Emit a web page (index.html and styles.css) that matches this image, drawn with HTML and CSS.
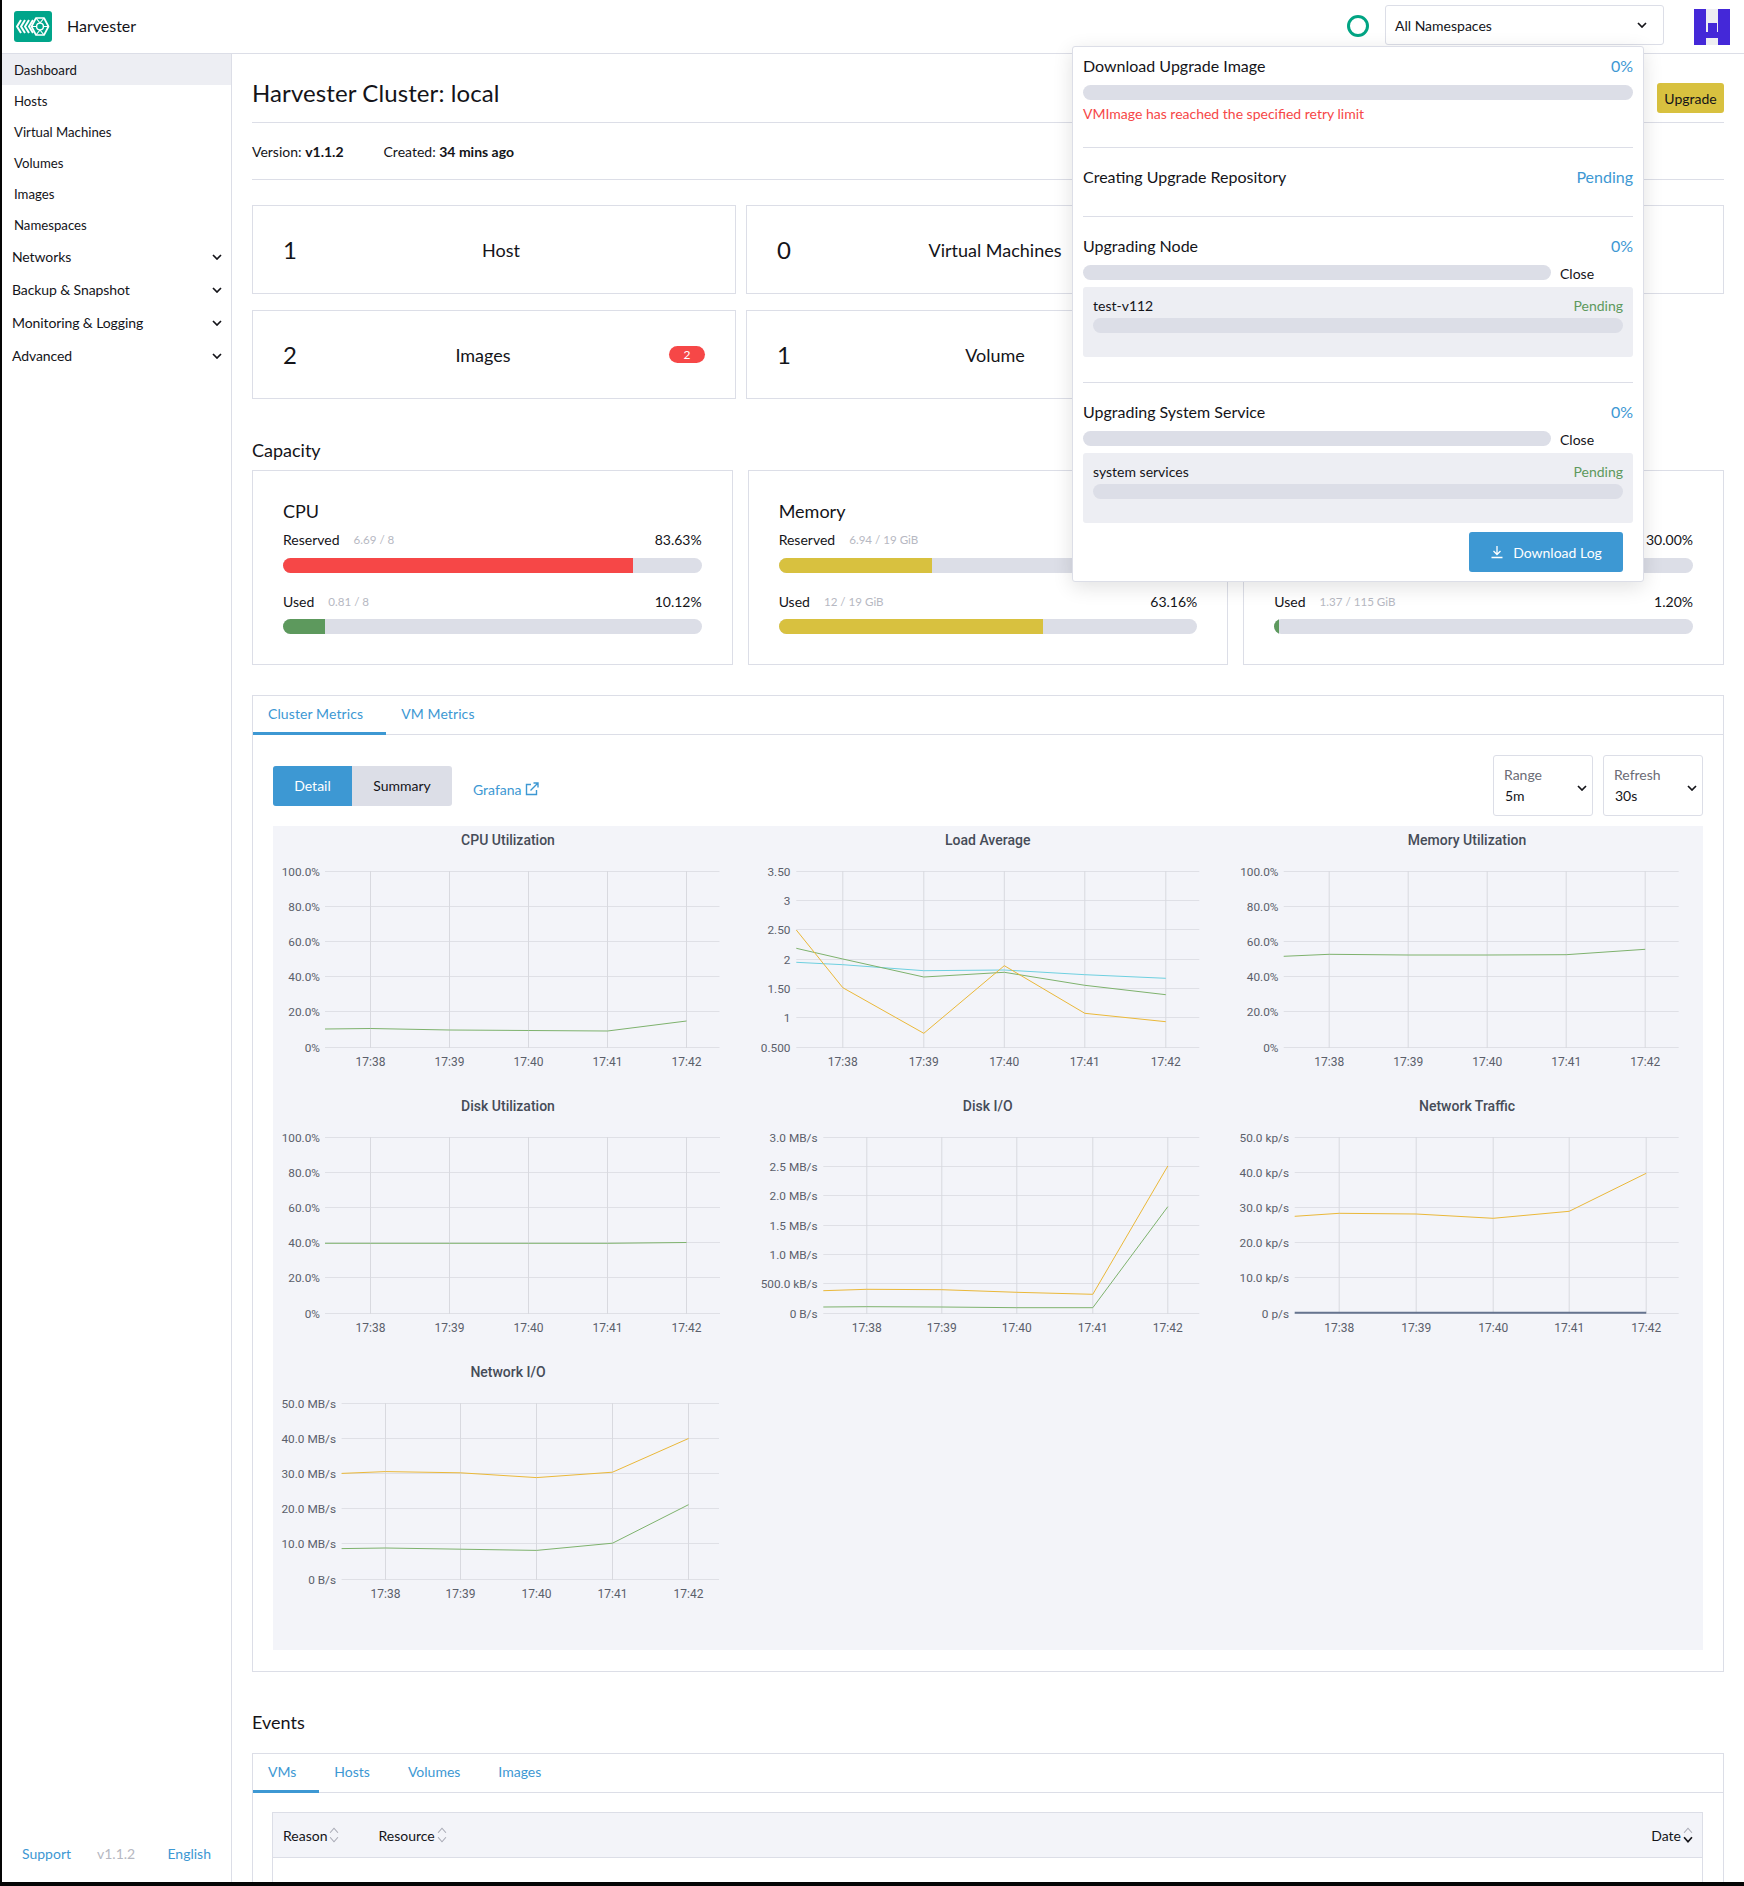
FILE: index.html
```html
<!DOCTYPE html>
<html lang="en">
<head>
<meta charset="utf-8">
<title>Harvester</title>
<link rel="stylesheet" href="styles.css">
</head>
<body>
<div class="app">
  <header class="topbar">
    <svg class="logo" viewBox="0 0 38 31" aria-hidden="true">
      <rect width="38" height="31" rx="3" fill="#00a58a"/>
      <g fill="none" stroke="#fff" stroke-width="2" stroke-linejoin="round">
        <path d="M7 9 L3 15.5 L7 22"/>
        <path d="M11 9 L7 15.5 L11 22"/>
        <path d="M15 9 L11 15.5 L15 22"/>
        <path d="M19 9 L15 15.5 L19 22"/>
        <path stroke-width="1.7" d="M22 7 L30 7 L34.5 15.5 L30 24 L22 24 L17.5 15.5 Z"/>
        <path stroke-width="1.2" d="M22 7 L26 12 L30 7 M22 24 L26 19 L30 24 M17.5 15.5 L22.5 15.5 M29.5 15.5 L34.5 15.5"/>
        <circle cx="26" cy="15.5" r="3.4" stroke-width="1.4"/>
      </g>
    </svg>
    <span class="brand">Harvester</span>
    <svg class="status" viewBox="0 0 22 22" aria-hidden="true"><circle cx="11" cy="11" r="9.5" fill="none" stroke="#00a483" stroke-width="3"/></svg>
    <div class="ns-select"><span>All Namespaces</span>
      <svg class="chev" viewBox="0 0 10 6"><path d="M1 1 L5 5 L9 1"/></svg>
    </div>
    <svg class="avatar" viewBox="0 0 36 36" aria-hidden="true">
      <rect width="36" height="36" fill="#eeeef2"/>
      <path fill="#4428d8" d="M0 0H12V36H0Z M24 0H36V36H24Z M14 14H23V23H14Z M12 23H24V29H12Z"/>
    </svg>
  </header>

  <div class="layout">
    <aside class="sidebar">
      <nav class="nav">
        <a class="nav-item active">Dashboard</a>
        <a class="nav-item">Hosts</a>
        <a class="nav-item">Virtual Machines</a>
        <a class="nav-item">Volumes</a>
        <a class="nav-item">Images</a>
        <a class="nav-item">Namespaces</a>
        <a class="nav-group">Networks<svg class="chev" viewBox="0 0 10 6"><path d="M1 1 L5 5 L9 1"/></svg></a>
        <a class="nav-group">Backup &amp; Snapshot<svg class="chev" viewBox="0 0 10 6"><path d="M1 1 L5 5 L9 1"/></svg></a>
        <a class="nav-group">Monitoring &amp; Logging<svg class="chev" viewBox="0 0 10 6"><path d="M1 1 L5 5 L9 1"/></svg></a>
        <a class="nav-group">Advanced<svg class="chev" viewBox="0 0 10 6"><path d="M1 1 L5 5 L9 1"/></svg></a>
      </nav>
      <div class="side-foot">
        <a class="link">Support</a>
        <span class="muted">v1.1.2</span>
        <a class="link foot-lang">English</a>
      </div>
    </aside>

    <main class="main">
      <div class="title-row">
        <h1>Harvester Cluster: local</h1>
        <button class="btn-upgrade">Upgrade</button>
      </div>
      <div class="meta">
        <span>Version: <b>v1.1.2</b></span>
        <span>Created: <b>34 mins ago</b></span>
      </div>

      <section class="counts">
        <div class="count"><span class="num">1</span><span class="lbl">Host</span></div>
        <div class="count"><span class="num">0</span><span class="lbl">Virtual Machines</span></div>
        <div class="count"></div>
        <div class="count"><span class="num">2</span><span class="lbl">Images</span><span class="badge">2</span></div>
        <div class="count"><span class="num">1</span><span class="lbl">Volume</span></div>
      </section>

      <h2 class="sec-title cap-title">Capacity</h2>
      <section class="capacity">
        <div class="cap">
          <h3>CPU</h3>
          <div class="cap-row"><span>Reserved</span><small>6.69 / 8</small><em>83.63%</em></div>
          <div class="bar"><i class="red" style="width:83.63%"></i></div>
          <div class="cap-row used"><span>Used</span><small>0.81 / 8</small><em>10.12%</em></div>
          <div class="bar"><i class="green" style="width:10.12%"></i></div>
        </div>
        <div class="cap">
          <h3>Memory</h3>
          <div class="cap-row"><span>Reserved</span><small>6.94 / 19 GiB</small><em>36.53%</em></div>
          <div class="bar"><i class="yellow" style="width:36.53%"></i></div>
          <div class="cap-row used"><span>Used</span><small>12 / 19 GiB</small><em>63.16%</em></div>
          <div class="bar"><i class="yellow" style="width:63.16%"></i></div>
        </div>
        <div class="cap">
          <h3>Storage</h3>
          <div class="cap-row"><span>Reserved</span><small>34.5 / 115 GiB</small><em>30.00%</em></div>
          <div class="bar"><i class="green" style="width:30%"></i></div>
          <div class="cap-row used"><span>Used</span><small>1.37 / 115 GiB</small><em>1.20%</em></div>
          <div class="bar"><i class="green" style="width:1.2%"></i></div>
        </div>
      </section>

      <section class="box metrics">
        <div class="tabs">
          <a class="tab active">Cluster Metrics</a>
          <a class="tab">VM Metrics</a>
        </div>
        <div class="box-body">
          <div class="toolbar">
            <div class="toggle"><span class="on">Detail</span><span>Summary</span></div>
            <a class="link grafana">Grafana
              <svg viewBox="0 0 14 14" aria-hidden="true"><path d="M11.5 8V12.5H1.5V2.5H6M5.5 8.5L12.5 1.5M8.5 1H13V5.5"/></svg>
            </a>
            <div class="pick push"><label>Range</label><span>5m</span><svg class="chev" viewBox="0 0 10 6"><path d="M1 1 L5 5 L9 1"/></svg></div>
            <div class="pick"><label>Refresh</label><span>30s</span><svg class="chev" viewBox="0 0 10 6"><path d="M1 1 L5 5 L9 1"/></svg></div>
          </div>

          <div class="charts">
            <svg class="chart" aria-label="CPU Utilization">
              <text class="ct" x="235" y="19">CPU Utilization</text>
              <path class="gh" d="M52 45.5H446.5M52 80.5H446.5M52 115.5H446.5M52 150.5H446.5M52 185.5H446.5M52 221.5H446.5"/>
              <path class="gv" d="M97.5 45V222M176.5 45V222M255.5 45V222M334.5 45V222M413.5 45V222"/>
              <g class="yl"><text x="47" y="50">100.0%</text><text x="47" y="85">80.0%</text><text x="47" y="120">60.0%</text><text x="47" y="155">40.0%</text><text x="47" y="190">20.0%</text><text x="47" y="226">0%</text></g>
              <g class="xl"><text x="97.5" y="240">17:38</text><text x="176.5" y="240">17:39</text><text x="255.5" y="240">17:40</text><text x="334.5" y="240">17:41</text><text x="413.5" y="240">17:42</text></g>
              <polyline class="s-green" points="52,203 97.5,202.5 176.5,204 255.5,204.5 334.5,205 413.5,195"/>
            </svg>

            <svg class="chart" aria-label="Load Average">
              <text class="ct" x="237.7" y="19">Load Average</text>
              <path class="gh" d="M46.3 45.5H449.3M46.3 74.5H449.3M46.3 103.5H449.3M46.3 133.5H449.3M46.3 162.5H449.3M46.3 191.5H449.3M46.3 221.5H449.3"/>
              <path class="gv" d="M92.8 45V222M173.8 45V222M254.3 45V222M334.8 45V222M415.8 45V222"/>
              <g class="yl"><text x="40.5" y="50">3.50</text><text x="40.5" y="79">3</text><text x="40.5" y="108">2.50</text><text x="40.5" y="138">2</text><text x="40.5" y="167">1.50</text><text x="40.5" y="196">1</text><text x="40.5" y="226">0.500</text></g>
              <g class="xl"><text x="92.8" y="240">17:38</text><text x="173.8" y="240">17:39</text><text x="254.3" y="240">17:40</text><text x="334.8" y="240">17:41</text><text x="415.8" y="240">17:42</text></g>
              <polyline class="s-cyan" points="46.3,136.3 92.8,138.7 173.8,144.7 254.3,144 334.8,148.7 415.8,152.3"/>
              <polyline class="s-green" points="46.3,122.3 92.8,133 173.8,151 254.3,146.3 334.8,159.3 415.8,168.7"/>
              <polyline class="s-orange" points="46.3,104 92.8,161.7 173.8,207.3 254.3,139.7 334.8,187.3 415.8,195.7"/>
            </svg>

            <svg class="chart" aria-label="Memory Utilization">
              <text class="ct" x="241" y="19">Memory Utilization</text>
              <path class="gh" d="M57.7 45.5H452.7M57.7 80.5H452.7M57.7 115.5H452.7M57.7 150.5H452.7M57.7 185.5H452.7M57.7 221.5H452.7"/>
              <path class="gv" d="M103.2 45V222M182.2 45V222M261.2 45V222M340.2 45V222M419.2 45V222"/>
              <g class="yl"><text x="52.5" y="50">100.0%</text><text x="52.5" y="85">80.0%</text><text x="52.5" y="120">60.0%</text><text x="52.5" y="155">40.0%</text><text x="52.5" y="190">20.0%</text><text x="52.5" y="226">0%</text></g>
              <g class="xl"><text x="103.2" y="240">17:38</text><text x="182.2" y="240">17:39</text><text x="261.2" y="240">17:40</text><text x="340.2" y="240">17:41</text><text x="419.2" y="240">17:42</text></g>
              <polyline class="s-green" points="57.7,130.3 103.2,128.3 182.2,129 261.2,129 340.2,128.7 419.2,123.3"/>
            </svg>

            <svg class="chart" aria-label="Disk Utilization">
              <text class="ct" x="235" y="19">Disk Utilization</text>
              <path class="gh" d="M52 45.5H447M52 80.5H447M52 115.5H447M52 150.5H447M52 185.5H447M52 221.5H447"/>
              <path class="gv" d="M97.5 45V222M176.5 45V222M255.5 45V222M334.5 45V222M413.5 45V222"/>
              <g class="yl"><text x="47" y="50">100.0%</text><text x="47" y="85">80.0%</text><text x="47" y="120">60.0%</text><text x="47" y="155">40.0%</text><text x="47" y="190">20.0%</text><text x="47" y="226">0%</text></g>
              <g class="xl"><text x="97.5" y="240">17:38</text><text x="176.5" y="240">17:39</text><text x="255.5" y="240">17:40</text><text x="334.5" y="240">17:41</text><text x="413.5" y="240">17:42</text></g>
              <polyline class="s-green" points="52,151.3 97.5,151.3 176.5,151.3 255.5,151.3 334.5,151.3 413.5,150.5"/>
            </svg>

            <svg class="chart" aria-label="Disk I/O">
              <text class="ct" x="237.7" y="19">Disk I/O</text>
              <path class="gh" d="M73.3 45.5H449.3M73.3 74.5H449.3M73.3 103.5H449.3M73.3 133.5H449.3M73.3 162.5H449.3M73.3 191.5H449.3M73.3 221.5H449.3"/>
              <path class="gv" d="M116.8 45V222M191.8 45V222M266.8 45V222M342.8 45V222M417.8 45V222"/>
              <g class="yl"><text x="67.5" y="50">3.0 MB/s</text><text x="67.5" y="79">2.5 MB/s</text><text x="67.5" y="108">2.0 MB/s</text><text x="67.5" y="138">1.5 MB/s</text><text x="67.5" y="167">1.0 MB/s</text><text x="67.5" y="196">500.0 kB/s</text><text x="67.5" y="226">0 B/s</text></g>
              <g class="xl"><text x="116.8" y="240">17:38</text><text x="191.8" y="240">17:39</text><text x="266.8" y="240">17:40</text><text x="342.8" y="240">17:41</text><text x="417.8" y="240">17:42</text></g>
              <polyline class="s-green" points="73.3,215 116.8,214.7 191.8,215 266.8,215.7 342.8,215.7 417.8,114.7"/>
              <polyline class="s-orange" points="73.3,198.7 116.8,197.3 191.8,197.7 266.8,200.3 342.8,202.3 417.8,74"/>
            </svg>

            <svg class="chart" aria-label="Network Traffic">
              <text class="ct" x="241" y="19">Network Traffic</text>
              <path class="gh" d="M68.7 45.5H452.7M68.7 80.5H452.7M68.7 115.5H452.7M68.7 150.5H452.7M68.7 185.5H452.7M68.7 221.5H452.7"/>
              <path class="gv" d="M113.2 45V222M190.2 45V222M267.2 45V222M343.2 45V222M420.2 45V222"/>
              <g class="yl"><text x="63" y="50">50.0 kp/s</text><text x="63" y="85">40.0 kp/s</text><text x="63" y="120">30.0 kp/s</text><text x="63" y="155">20.0 kp/s</text><text x="63" y="190">10.0 kp/s</text><text x="63" y="226">0 p/s</text></g>
              <g class="xl"><text x="113.2" y="240">17:38</text><text x="190.2" y="240">17:39</text><text x="267.2" y="240">17:40</text><text x="343.2" y="240">17:41</text><text x="420.2" y="240">17:42</text></g>
              <polyline class="s-orange" points="68.7,124.3 113.2,121.3 190.2,122 267.2,126.3 343.2,119.3 420.2,81.3"/>
              <polyline class="s-zero" points="68.7,220.8 420.2,220.8"/>
            </svg>

            <svg class="chart" aria-label="Network I/O">
              <text class="ct" x="235" y="19">Network I/O</text>
              <path class="gh" d="M68.6 45.5H446M68.6 80.5H446M68.6 115.5H446M68.6 150.5H446M68.6 185.5H446M68.6 221.5H446"/>
              <path class="gv" d="M112.5 45V222M187.5 45V222M263.5 45V222M339.5 45V222M415.5 45V222"/>
              <g class="yl"><text x="63" y="50">50.0 MB/s</text><text x="63" y="85">40.0 MB/s</text><text x="63" y="120">30.0 MB/s</text><text x="63" y="155">20.0 MB/s</text><text x="63" y="190">10.0 MB/s</text><text x="63" y="226">0 B/s</text></g>
              <g class="xl"><text x="112.5" y="240">17:38</text><text x="187.5" y="240">17:39</text><text x="263.5" y="240">17:40</text><text x="339.5" y="240">17:41</text><text x="415.5" y="240">17:42</text></g>
              <polyline class="s-green" points="68.6,190.6 112.5,190 187.5,191.2 263.5,192.4 339.5,185.2 415.5,146.7"/>
              <polyline class="s-orange" points="68.6,115.4 112.5,113.6 187.5,114.8 263.5,119.6 339.5,114.2 415.5,80.5"/>
            </svg>
          </div>
        </div>
      </section>

      <h2 class="sec-title ev-title">Events</h2>
      <section class="box events">
        <div class="tabs">
          <a class="tab active">VMs</a>
          <a class="tab">Hosts</a>
          <a class="tab">Volumes</a>
          <a class="tab">Images</a>
        </div>
        <div class="ev-body">
          <div class="ev-table">
            <div class="thead">
              <span class="th">Reason<svg class="sort" viewBox="0 0 10 16"><path d="M1.5 6 L5 2 L8.5 6"/><path d="M1.5 10 L5 14 L8.5 10"/></svg></span>
              <span class="th">Resource<svg class="sort" viewBox="0 0 10 16"><path d="M1.5 6 L5 2 L8.5 6"/><path d="M1.5 10 L5 14 L8.5 10"/></svg></span>
              <span class="th th-date">Date<svg class="sort" viewBox="0 0 10 16"><path d="M1.5 6 L5 2 L8.5 6"/><path class="sort-on" d="M1.5 10 L5 14 L8.5 10"/></svg></span>
            </div>
          </div>
        </div>
      </section>
    </main>
  </div>

  <div class="popover">
    <div class="pop-head"><span>Download Upgrade Image</span><span class="blue">0%</span></div>
    <div class="bar pop-bar"></div>
    <p class="pop-error">VMImage has reached the specified retry limit</p>
    <hr class="pop-hr first">
    <div class="pop-head"><span>Creating Upgrade Repository</span><span class="blue">Pending</span></div>
    <hr class="pop-hr second">
    <div class="pop-head"><span>Upgrading Node</span><span class="blue">0%</span></div>
    <div class="pop-barrow"><div class="bar"></div><span>Close</span></div>
    <div class="pop-panel">
      <div class="pop-sub"><span>test-v112</span><span class="ok">Pending</span></div>
      <div class="bar"></div>
    </div>
    <hr class="pop-hr third">
    <div class="pop-head"><span>Upgrading System Service</span><span class="blue">0%</span></div>
    <div class="pop-barrow"><div class="bar"></div><span>Close</span></div>
    <div class="pop-panel">
      <div class="pop-sub"><span>system services</span><span class="ok">Pending</span></div>
      <div class="bar"></div>
    </div>
    <div class="pop-foot">
      <button class="btn-log">
        <svg viewBox="0 0 14 14" aria-hidden="true"><path d="M7 1V9M3.5 6L7 9.5L10.5 6M1.5 12.5H12.5"/></svg>
        Download Log
      </button>
    </div>
  </div>
</div>
</body>
</html>
```
FILE: styles.css
```css
* { box-sizing: border-box; }
html, body { margin: 0; height: 100%; }
body {
  background: #050505;
  font-family: Lato, "Open Sans", sans-serif;
  font-size: 14px;
  color: #141419;
  overflow: hidden;
}
a { text-decoration: none; }
.app {
  position: relative;
  margin-left: 2px;
  height: 1882px;
  background: #fff;
  display: flex;
  flex-direction: column;
  overflow: hidden;
}

/* top bar */
.topbar {
  flex: none;
  height: 54px;
  display: flex;
  align-items: flex-start;
  border-bottom: 1px solid #dcdee7;
  padding-right: 14px;
}
.logo { width: 38px; height: 31px; margin: 11px 0 0 12px; }
.brand { font-size: 16px; margin: 15px 0 0 15px; line-height: 22px; color: #141419; }
.status { width: 22px; height: 22px; margin: 15px 0 0 auto; }
.ns-select {
  width: 279px;
  height: 40px;
  margin: 5px 0 0 16px;
  padding: 0 16px 0 9px;
  border: 1px solid #dcdee7;
  border-radius: 3px;
  display: flex;
  align-items: center;
  justify-content: space-between;
}
.avatar { width: 36px; height: 36px; margin: 9px 0 0 30px; }
.chev { width: 10px; height: 6px; fill: none; stroke: #141419; stroke-width: 1.7; flex: none; }

/* shell */
.layout { flex: 1; display: flex; min-height: 0; }
.sidebar {
  flex: none;
  width: 230px;
  border-right: 1px solid #dcdee7;
  display: flex;
  flex-direction: column;
}
.nav { flex: 1; }
.nav-item {
  display: flex;
  align-items: center;
  height: 31px;
  padding-left: 12px;
  color: #141419;
  font-size: 13.2px;
}
.nav-item.active { background: #edeef3; }
.nav-group {
  display: flex;
  align-items: center;
  justify-content: space-between;
  height: 33px;
  padding: 0 9px 0 10px;
  color: #141419;
  letter-spacing: -.1px;
}
.side-foot {
  display: flex;
  padding: 0 20px 18px 20px;
  line-height: 20px;
}
.link { color: #3d98d3; }
.muted { color: #b6b8c2; margin-left: 26px; }
.foot-lang { margin-left: auto; }

.main { flex: 1; min-width: 0; padding: 0 20px 0 20px; }
.title-row {
  height: 69px;
  padding-top: 21px;
  display: flex;
  justify-content: space-between;
  align-items: flex-start;
  border-bottom: 1px solid #dcdee7;
}
h1 { margin: 0; font-size: 24px; font-weight: 400; line-height: 36px; letter-spacing: .1px; }
.btn-upgrade {
  margin-top: 8px;
  width: 67px;
  height: 30px;
  border: 0;
  border-radius: 3px;
  background: #d8c13f;
  font: 14px Lato, sans-serif;
  color: #141419;
  padding: 0;
}
.meta {
  height: 57px;
  display: flex;
  align-items: center;
  gap: 40px;
  border-bottom: 1px solid #dcdee7;
  padding-top: 1px;
}
.meta b { font-weight: 700; }

.counts {
  margin-top: 25px;
  display: grid;
  grid-template-columns: 484px 484px 484px;
  gap: 16px 10px;
}
.count {
  height: 89px;
  border: 1px solid #dcdee7;
  display: flex;
  align-items: center;
  padding: 0 30px 0 30px;
}
.num { font-size: 24px; min-width: 14px; }
.lbl { flex: 1; text-align: center; font-size: 18px; }
.badge {
  width: 36px;
  height: 17px;
  border-radius: 9px;
  background: #f64747;
  color: #fff;
  font-size: 12px;
  line-height: 17px;
  text-align: center;
}

.sec-title { margin: 0; font-size: 18px; font-weight: 400; line-height: 24px; }
.cap-title { margin-top: 39px; }
.capacity {
  margin-top: 8px;
  display: grid;
  grid-template-columns: repeat(3, 1fr);
  gap: 15px;
}
.cap {
  height: 195px;
  border: 1px solid #dcdee7;
  padding: 27px 30px 0 30px;
}
.cap h3 { margin: 0; font-size: 18px; font-weight: 400; line-height: 26px; }
.cap-row { display: flex; align-items: center; height: 30px; }
.cap-row.used { margin-top: 13px; }
.cap-row small { font-size: 11.6px; color: #b6b8c2; margin-left: 14px; }
.cap-row em { font-style: normal; margin-left: auto; }
.bar {
  height: 15px;
  border-radius: 8px;
  background: #dcdee7;
  overflow: hidden;
}
.cap-row + .bar { margin-top: 4px; }
.cap-row.used + .bar { margin-top: 3px; }
.bar i { display: block; height: 100%; }
.red { background: #f64747; }
.green { background: #5d995d; }
.yellow { background: #d8c13f; }

.box { border: 1px solid #dcdee7; }
.metrics { margin-top: 30px; height: 977px; }
.tabs { display: flex; height: 39px; border-bottom: 1px solid #dcdee7; }
.tab {
  height: 39px;
  padding: 0 23px 0 15px;
  color: #3d98d3;
  line-height: 36px;
}
.metrics .tab { letter-spacing: .1px; }
.tab.active { border-bottom: 3px solid #3d98d3; }
.box-body { padding: 20px 20px 0 20px; }
.toolbar { display: flex; align-items: flex-start; height: 61px; }
.toggle {
  margin-top: 11px;
  display: flex;
  height: 40px;
  border-radius: 3px;
  overflow: hidden;
  background: #dcdee7;
  line-height: 40px;
}
.toggle span { width: 100px; text-align: center; }
.toggle .on { width: 79px; background: #3d98d3; color: #fff; }
.grafana { margin: 25px 0 0 21px; line-height: 20px; display: flex; align-items: center; gap: 3px; }
.grafana svg { width: 14px; height: 14px; fill: none; stroke: #3d98d3; stroke-width: 1.4; margin-top: -3px; }
.pick {
  position: relative;
  width: 100px;
  height: 61px;
  margin-left: 10px;
  border: 1px solid #dcdee7;
  border-radius: 3px;
  padding: 8px 0 0 10px;
  line-height: 21px;
}
.pick.push { margin-left: auto; }
.pick label { display: block; color: #6c6c76; }
.pick span { display: block; padding-left: 1px; }
.pick .chev { position: absolute; right: 5px; top: 29px; }

.charts {
  margin-top: 10px;
  height: 824px;
  background: #f3f4f9;
  display: grid;
  grid-template-columns: repeat(3, 1fr);
  grid-auto-rows: 266px;
}
.chart { display: block; width: 100%; height: 266px; overflow: visible; font-family: Roboto, sans-serif; }
.ct { font-size: 14px; font-weight: 500; fill: #464c58; text-anchor: middle; }
.gh { stroke: #dfe0e6; stroke-width: 1; fill: none; }
.gv { stroke: #d8d9df; stroke-width: 1; fill: none; }
.yl { transform: translateY(-.4px); }
.yl text { font-size: 11.8px; fill: #5b5f6b; text-anchor: end; }
.xl text { font-size: 12px; fill: #5b5f6b; text-anchor: middle; }
.s-green, .s-orange, .s-cyan, .s-zero { fill: none; stroke-width: 1; }
.s-green { stroke: #7eb26d; }
.s-orange { stroke: #eab839; }
.s-cyan { stroke: #6ed0e0; }
.s-zero { stroke: #66748f; stroke-width: 2; }

.ev-title { margin-top: 38px; }
.events { margin-top: 19px; height: 200px; }
.ev-body { padding: 19px 20px 0 19px; }
.ev-table { height: 200px; border: 1px solid #dcdee7; }
.thead {
  height: 45px;
  display: flex;
  align-items: center;
  padding: 0 8px 0 10px;
  background: #f3f4f9;
  border-bottom: 1px solid #dcdee7;
  gap: 38px;
}
.th { display: flex; align-items: center; gap: 1px; }
.th-date { margin-left: auto; }
.sort { width: 12px; height: 18px; fill: none; stroke: #a9abb6; stroke-width: 1; }
.sort-on { stroke: #141419; stroke-width: 1.5; }

/* upgrade popover */
.popover {
  position: absolute;
  left: 1070px;
  top: 46px;
  width: 572px;
  height: 536px;
  background: #fff;
  border: 1px solid #dcdee7;
  border-radius: 3px;
  box-shadow: 0 5px 20px rgba(0, 0, 0, .12);
  padding: 7px 10px 0 10px;
}
.pop-head {
  display: flex;
  justify-content: space-between;
  font-size: 16px;
  line-height: 24px;
}
.blue { color: #3d98d3; }
.ok { color: #5d995d; }
.pop-bar { margin-top: 7px; }
.pop-error { margin: 4px 0 0; color: #f64747; line-height: 20px; }
.pop-hr { border: 0; border-top: 1px solid #dcdee7; margin: 0; }
.pop-hr.first { margin-top: 23px; margin-bottom: 17px; }
.pop-hr.second { margin-top: 27px; margin-bottom: 17px; }
.pop-hr.third { margin-top: 25px; margin-bottom: 17px; }
.pop-barrow { display: flex; align-items: center; margin-top: 7px; height: 15px; }
.pop-barrow .bar { flex: 1; }
.pop-barrow span { width: 82px; padding: 3px 0 0 9px; line-height: 20px; }
.pop-panel {
  margin-top: 7px;
  height: 70px;
  background: #edeef3;
  border-radius: 3px;
  padding: 9px 10px 0;
}
.pop-sub { display: flex; justify-content: space-between; line-height: 20px; margin-bottom: 2px; }
.pop-foot { margin-top: 9px; display: flex; justify-content: flex-end; padding-right: 10px; }
.btn-log {
  width: 154px;
  height: 40px;
  border: 0;
  border-radius: 3px;
  background: #3d98d3;
  color: #fff;
  font: 14px Lato, sans-serif;
  display: flex;
  align-items: center;
  justify-content: center;
  gap: 9px;
  padding: 0;
}
.btn-log svg { width: 14px; height: 14px; fill: none; stroke: #fff; stroke-width: 1.3; }
```
